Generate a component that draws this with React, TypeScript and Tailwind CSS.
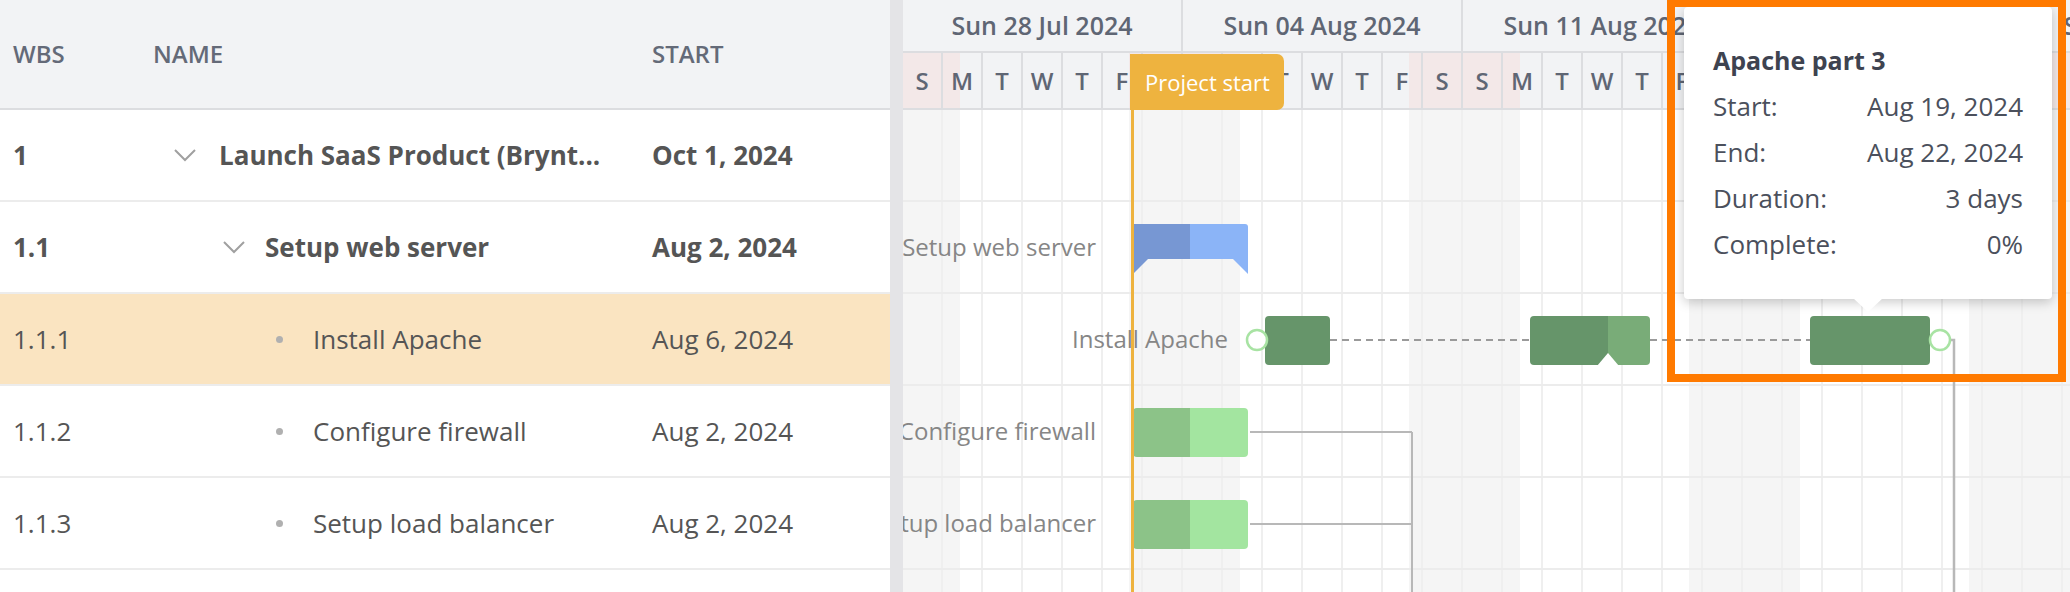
import React from "react";

const DAY_W = 40;
const days = Array.from({ length: 30 }, (_, i) => "SMTWTFS"[i % 7]);
const weeks = [
  "Sun 28 Jul 2024",
  "Sun 04 Aug 2024",
  "Sun 11 Aug 2024",
  "Sun 18 Aug 2024",
  "Sun 25 Aug 2024",
];
// non-working time bands (Sat..Mon, offset like the original)
const weekends = [-1, 6, 13, 20, 27].map((sat) => ({
  left: sat * DAY_W - 14,
  width: 111,
}));

type Row = {
  wbs: string;
  name: string;
  start: string;
  level: 0 | 1 | 2;
  bold?: boolean;
  selected?: boolean;
};

const rows: Row[] = [
  { wbs: "1", name: "Launch SaaS Product (Brynt...", start: "Oct 1, 2024", level: 0, bold: true },
  { wbs: "1.1", name: "Setup web server", start: "Aug 2, 2024", level: 1, bold: true },
  { wbs: "1.1.1", name: "Install Apache", start: "Aug 6, 2024", level: 2, selected: true },
  { wbs: "1.1.2", name: "Configure firewall", start: "Aug 2, 2024", level: 2 },
  { wbs: "1.1.3", name: "Setup load balancer", start: "Aug 2, 2024", level: 2 },
  { wbs: "", name: "", start: "", level: 2 },
];

function Chevron() {
  return (
    <svg width="24" height="14" viewBox="0 0 24 14" className="shrink-0">
      <path d="M2 2 L12 12 L22 2" fill="none" stroke="#a0a0a0" strokeWidth="2" />
    </svg>
  );
}

function NameCell({ row }: { row: Row }) {
  if (!row.name) return <div className="w-[500px]" />;
  if (row.level === 0)
    return (
      <div className="flex w-[500px] items-center pl-[33px]">
        <Chevron />
        <span className="ml-[22px] whitespace-nowrap font-bold">{row.name}</span>
      </div>
    );
  if (row.level === 1)
    return (
      <div className="flex w-[500px] items-center pl-[82px]">
        <Chevron />
        <span className="ml-[19px] whitespace-nowrap font-bold">{row.name}</span>
      </div>
    );
  return (
    <div className="flex w-[500px] items-center pl-[136px]">
      <span className="h-[7px] w-[7px] shrink-0 rounded-full bg-[#b0b0b0]" />
      <span className="ml-[30px] whitespace-nowrap">{row.name}</span>
    </div>
  );
}

function LeftGrid() {
  return (
    <div className="flex w-[890px] shrink-0 flex-col">
      <div className="flex h-[110px] shrink-0 items-center border-b-2 border-[#dcdde0] bg-[#f2f3f5] text-[24px] font-semibold text-[#646a78] shadow-[0_2px_4px_rgba(0,0,0,0.05)]">
        <div className="w-[140px] pl-[13px]">WBS</div>
        <div className="w-[500px] pl-[13px]">NAME</div>
        <div className="pl-[12px]">START</div>
      </div>
      {rows.map((r, i) => (
        <div
          key={i}
          className={
            "flex h-[92px] shrink-0 items-center border-b-2 border-[#ececec] text-[26px] text-[#555555] " +
            (r.selected ? "bg-[#fae4c1]" : "bg-white")
          }
        >
          <div className={"w-[140px] pl-[13px] " + (r.bold ? "font-bold" : "")}>{r.wbs}</div>
          <NameCell row={r} />
          <div className={"pl-[12px] whitespace-nowrap " + (r.bold ? "font-bold" : "")}>{r.start}</div>
        </div>
      ))}
    </div>
  );
}

function TaskLabel({ right, text }: { right: number; text: string }) {
  return (
    <div
      className="absolute top-0 flex h-[90px] items-center whitespace-nowrap text-[24px] text-[#868686]"
      style={{ right: 1167 - right }}
    >
      {text}
    </div>
  );
}

function GreenBar({ left }: { left: number }) {
  return (
    <div className="absolute top-[22px] flex h-[49px] w-[115px] overflow-hidden rounded-[4px]" style={{ left }}>
      <div className="w-[57px] bg-[#8cc388]" />
      <div className="flex-1 bg-[#a3e5a0]" />
    </div>
  );
}

function Timeline() {
  return (
    <div className="relative flex min-w-0 flex-1 flex-col overflow-hidden">
      {/* header */}
      <div className="relative h-[110px] shrink-0 border-b-2 border-[#dcdde0] bg-[#f2f3f5] text-[#5f6674]">
        {weekends.map((w, i) => (
          <div
            key={i}
            className="absolute bottom-0 top-[53px] bg-[#f3e8e8]"
            style={{ left: w.left, width: w.width }}
          />
        ))}
        <div className="relative flex h-[53px] border-b-2 border-[#dcdde0]">
          {weeks.map((w) => (
            <div
              key={w}
              className="flex w-[280px] shrink-0 items-center justify-center whitespace-nowrap border-r-2 border-[#dcdde0] text-[25px] font-semibold"
            >
              {w}
            </div>
          ))}
        </div>
        <div className="relative flex h-[55px]">
          {days.map((d, i) => (
            <div
              key={i}
              className="flex w-[40px] shrink-0 items-center justify-center border-r-2 border-[#dcdde0] text-[24px] font-semibold"
            >
              {d}
            </div>
          ))}
        </div>
        <div className="absolute left-[227px] top-[54px] flex h-[56px] w-[154px] items-center rounded-r-[7px] bg-[#eeb33f] pl-[15px] text-[22px] text-white">
          Project start
        </div>
      </div>

      {/* body */}
      <div className="relative flex-1">
        {weekends.map((w, i) => (
          <div
            key={i}
            className="absolute bottom-0 top-0 bg-[#f5f5f5]"
            style={{ left: w.left, width: w.width }}
          />
        ))}
        <div className="absolute inset-0 flex">
          {days.map((_, i) => (
            <div key={i} className="h-full w-[40px] shrink-0 border-r-2 border-[#efefef]" />
          ))}
        </div>

        <div className="relative flex flex-col">
          <div className="relative h-[92px] border-b-2 border-[#ececec]" />
          <div className="relative h-[92px] border-b-2 border-[#ececec]">
            <TaskLabel right={193} text="Setup web server" />
            <svg className="absolute left-[230px] top-[22px]" width="115" height="50" viewBox="0 0 115 50">
              <path d="M0 0 H57 V35 H0 Z" fill="#7797d3" />
              <path d="M57 0 H112 Q115 0 115 3 V35 H57 Z" fill="#8bb4f7" />
              <path d="M0 35 H15 L0 50 Z" fill="#7797d3" />
              <path d="M100 35 H115 V50 Z" fill="#8bb4f7" />
            </svg>
          </div>
          <div className="relative h-[92px] border-b-2 border-[#ececec]">
            <TaskLabel right={325} text="Install Apache" />
            <div className="absolute left-[362px] top-[22px] h-[49px] w-[65px] rounded-[4px] bg-[#66956a]" />
            <div className="absolute left-[627px] top-[22px] flex h-[49px] w-[120px] overflow-hidden rounded-[4px]">
              <div className="w-[78px] bg-[#66956a]" />
              <div className="flex-1 bg-[#79ac78]" />
            </div>
            <svg className="absolute left-[694px] top-[58px]" width="22" height="14" viewBox="0 0 22 14">
              <path d="M0 14 L11 1 L22 14 Z" fill="#ffffff" />
            </svg>
            <div className="absolute left-[907px] top-[22px] h-[49px] w-[120px] rounded-[4px] bg-[#66956a]" />
          </div>
          <div className="relative h-[92px] border-b-2 border-[#ececec]">
            <TaskLabel right={193} text="Configure firewall" />
            <GreenBar left={230} />
          </div>
          <div className="relative h-[92px] border-b-2 border-[#ececec]">
            <TaskLabel right={193} text="Setup load balancer" />
            <GreenBar left={230} />
          </div>
          <div className="relative h-[92px] border-b-2 border-[#ececec]" />
        </div>

        {/* dependency lines and terminals */}
        <svg className="pointer-events-none absolute inset-0" width="1167" height="482">
          <path d="M427 230 H627 M747 230 H907" stroke="#9a9a9a" strokeWidth="2" strokeDasharray="7 5" fill="none" />
          <path d="M347 322 H509 M347 414 H509 M509 322 V482" stroke="#b8b8b8" strokeWidth="2" fill="none" />
          <path d="M1046 230 H1051 V482" stroke="#b8b8b8" strokeWidth="2.5" fill="none" />
          <circle cx="354" cy="230" r="10" fill="#fff" stroke="#a8e3a3" strokeWidth="2.5" />
          <circle cx="1037" cy="230" r="10" fill="#fff" stroke="#a8e3a3" strokeWidth="2.5" />
        </svg>

        <div className="absolute bottom-0 left-[228px] top-0 w-[3px] bg-[#eeb33f]" />
      </div>
    </div>
  );
}

function Tooltip() {
  return (
    <>
      <div className="absolute left-[1684px] top-[7px] h-[292px] w-[368px] rounded-[4px] bg-white px-[29px] pt-[33px] text-[26px] text-[#4b505c] shadow-[0_3px_12px_rgba(0,0,0,0.22)]">
        <div className="text-[25px] font-bold leading-[40px] text-[#3e4350]">Apache part 3</div>
        <div className="mt-[3px] flex h-[46px] items-center justify-between">
          <span>Start:</span>
          <span>Aug 19, 2024</span>
        </div>
        <div className="flex h-[46px] items-center justify-between">
          <span>End:</span>
          <span>Aug 22, 2024</span>
        </div>
        <div className="flex h-[46px] items-center justify-between">
          <span>Duration:</span>
          <span>3 days</span>
        </div>
        <div className="flex h-[46px] items-center justify-between">
          <span>Complete:</span>
          <span>0%</span>
        </div>
      </div>
      <svg className="absolute left-[1853px] top-[298px]" width="30" height="15" viewBox="0 0 30 15">
        <path d="M0 0 L15 14 L30 0 Z" fill="#ffffff" />
      </svg>
      <div className="pointer-events-none absolute left-[1667px] top-0 h-[382px] w-[399px] border-[8px] border-t-[7px] border-[#ff7a00]" />
    </>
  );
}

export default function App() {
  return (
    <div
      className="relative flex h-[592px] w-[2070px] overflow-hidden bg-white"
      style={{ fontFamily: '"Open Sans", "Noto Sans", sans-serif' }}
    >
      <LeftGrid />
      <div className="w-[13px] shrink-0 bg-[#e4e4e7]" />
      <Timeline />
      <Tooltip />
    </div>
  );
}
